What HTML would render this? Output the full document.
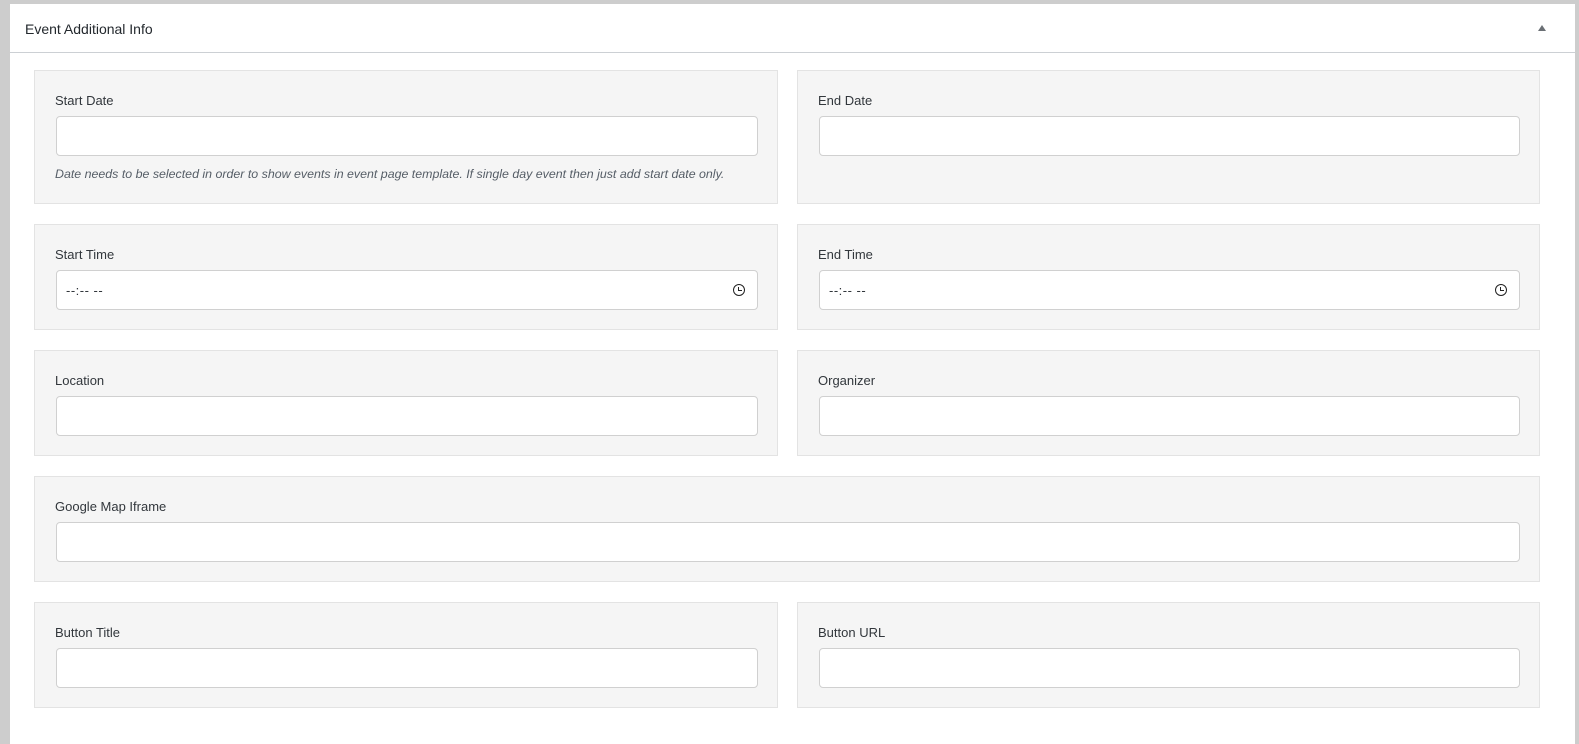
<!DOCTYPE html>
<html><head><style>
*{box-sizing:border-box}
body{margin:0;width:1579px;height:736px;background:#cdcdcd;font-family:"Liberation Sans",sans-serif;overflow:hidden;position:relative}
.panel{position:absolute;left:10px;top:4px;width:1565px;height:740px;background:#fff}
.hd{height:49px;border-bottom:1px solid #ccd0d4;position:relative}
.hd span{position:absolute;left:15px;top:17px;font-size:14px;color:#23282d}
.tri{position:absolute;right:29px;top:21px;width:0;height:0;border-left:4px solid transparent;border-right:4px solid transparent;border-bottom:6px solid #6a6f74}
.box{position:absolute;background:#f5f5f5;border:1px solid #e3e3e3}
.box label{position:absolute;left:20px;top:22px;font-size:13px;color:#32373c}
.inp{position:absolute;left:21px;right:19px;top:45px;height:40px;background:#fff;border:1px solid #d0d0d0;border-radius:4px}
.t{position:absolute;left:9px;top:12px;font-size:13px;color:#32373c;letter-spacing:0.5px}
.clk{position:absolute;right:12px;top:13px;width:12px;height:12px;border:1.5px solid #222;border-radius:50%}
.clk:after{content:"";position:absolute;left:4px;top:1.5px;width:2.5px;height:3.5px;border-left:1.3px solid #222;border-bottom:1.3px solid #222}
.note{position:absolute;left:20px;top:96px;font-size:12.4px;font-style:italic;color:#555d66}
</style></head><body>
<div class="panel"><div class="hd"><span>Event Additional Info</span><div class="tri"></div></div></div>
<div class="box" style="left:34px;top:70px;width:744px;height:134px"><label>Start Date</label><div class="inp"></div><div class="note">Date needs to be selected in order to show events in event page template. If single day event then just add start date only.</div></div>
<div class="box" style="left:797px;top:70px;width:743px;height:134px"><label>End Date</label><div class="inp"></div></div>
<div class="box" style="left:34px;top:224px;width:744px;height:106px"><label>Start Time</label><div class="inp"><span class="t">--:-- --</span><div class="clk"></div></div></div>
<div class="box" style="left:797px;top:224px;width:743px;height:106px"><label>End Time</label><div class="inp"><span class="t">--:-- --</span><div class="clk"></div></div></div>
<div class="box" style="left:34px;top:350px;width:744px;height:106px"><label>Location</label><div class="inp"></div></div>
<div class="box" style="left:797px;top:350px;width:743px;height:106px"><label>Organizer</label><div class="inp"></div></div>
<div class="box" style="left:34px;top:476px;width:1506px;height:106px"><label>Google Map Iframe</label><div class="inp"></div></div>
<div class="box" style="left:34px;top:602px;width:744px;height:106px"><label>Button Title</label><div class="inp"></div></div>
<div class="box" style="left:797px;top:602px;width:743px;height:106px"><label>Button URL</label><div class="inp"></div></div>
</body></html>
